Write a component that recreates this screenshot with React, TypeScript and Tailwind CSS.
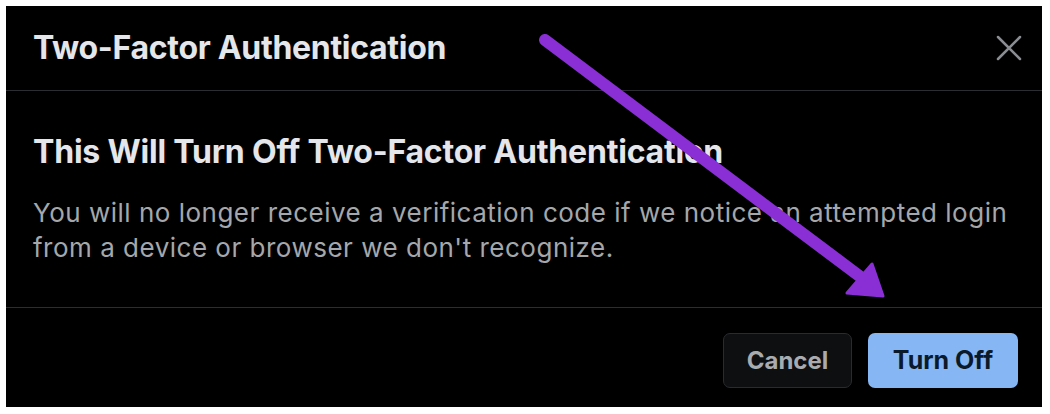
import React from 'react';

const font = { fontFamily: 'Inter, "Liberation Sans", sans-serif' };

const CloseIcon: React.FC = () => (
  <svg width="26" height="26" viewBox="0 0 26 26" className="text-[#8a8d91]">
    <path d="M2 2 L24 24 M24 2 L2 24" stroke="currentColor" strokeWidth="2.5" strokeLinecap="round" />
  </svg>
);

const Arrow: React.FC = () => (
  <svg className="pointer-events-none absolute left-0 top-0" width="1050" height="414" viewBox="0 0 1050 414">
    <line x1="545" y1="40" x2="862" y2="278" stroke="#8a2fd6" strokeWidth="12" strokeLinecap="round" />
    <polygon points="883,296 847,293 872,264" fill="#8a2fd6" stroke="#8a2fd6" strokeWidth="3" strokeLinejoin="round" />
  </svg>
);

const App: React.FC = () => (
  <div className="relative h-[414px] w-[1050px] bg-white pl-[6px] pt-[6px]" style={font}>
    <div className="flex h-[401px] w-[1036px] flex-col bg-black">
      {/* Header */}
      <div className="flex h-[85px] items-center justify-between border-b border-[#2c2d30] pl-[27px] pr-[20px]">
        <h1 className="text-[32px] font-bold leading-[38px] tracking-[-0.3px] text-[#e4e6eb]">Two-Factor Authentication</h1>
        <CloseIcon />
      </div>

      {/* Body */}
      <div className="flex h-[217px] flex-col border-b border-[#2c2d30] px-[27px] pt-[42px]">
        <h2 className="text-[32px] font-bold leading-[38px] tracking-[-0.2px] text-[#e4e6eb]">
          This Will Turn Off Two-Factor Authentication
        </h2>
        <p className="mt-[24px] text-[26px] leading-[35px] tracking-[0.5px] text-[#a4a7ab]">
          You will no longer receive a verification code if we notice an attempted login from a device or browser we
          don't recognize.
        </p>
      </div>

      {/* Footer */}
      <div className="flex flex-1 items-start justify-end gap-4 pr-[24px] pt-[25px]">
        <button className="h-[55px] w-[129px] rounded-[7px] border border-[#2a2b2e] bg-[#0e0f11] text-[24px] font-bold text-[#a8abaf]">
          Cancel
        </button>
        <button className="h-[55px] w-[150px] rounded-[7px] bg-[#86b7f4] text-[25px] font-bold text-[#0b1a2b]">
          Turn Off
        </button>
      </div>
    </div>
    <Arrow />
  </div>
);

export default App;
